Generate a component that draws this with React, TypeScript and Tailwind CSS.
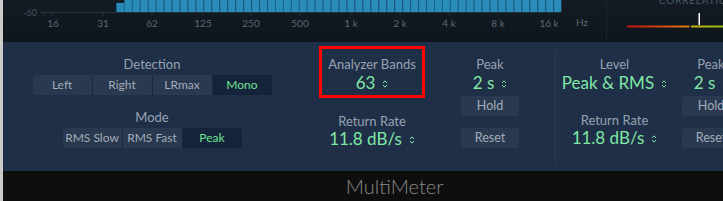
import type { ReactNode } from "react";

const font = { fontFamily: "Lato, 'Open Sans', sans-serif" };

const freqLabels: [string, number][] = [
  ["16", 53],
  ["31", 103],
  ["62", 152],
  ["125", 203],
  ["250", 251],
  ["500", 300],
  ["1 k", 351],
  ["2 k", 400],
  ["4 k", 449],
  ["8 k", 498],
  ["16 k", 549],
];

const Stepper = () => (
  <svg width="6" height="10" viewBox="0 0 6 10" className="ml-[7px] mt-[2px]">
    <path d="M1 4 L3 1.8 L5 4 M1 6 L3 8.2 L5 6" fill="none" stroke="#7fe6a4" strokeWidth="1" />
  </svg>
);

const Label = ({ children }: { children: ReactNode }) => (
  <div className="text-[13px] leading-[13px] text-[#97a2b2] whitespace-nowrap">{children}</div>
);

const Value = ({ children }: { children: ReactNode }) => (
  <div className="flex items-center text-[17px] leading-[18px] text-[#7fe6a4] whitespace-nowrap">
    {children}
    <Stepper />
  </div>
);

const Segmented = ({ items, active }: { items: string[]; active: string }) => (
  <div className="flex h-[20px] rounded-[3px] overflow-hidden bg-[#1a283c] gap-px">
    {items.map((item) => (
      <div
        key={item}
        className={`w-[59px] flex items-center justify-center text-[12px] ${
          item === active ? "bg-[#15233a] text-[#6ee391]" : "bg-[#293950] text-[#a3acb9]"
        }`}
      >
        {item}
      </div>
    ))}
  </div>
);

const Button = ({ children }: { children: ReactNode }) => (
  <div className="w-[58px] h-[20px] rounded-[3px] bg-[#293950] flex items-center justify-center text-[12.5px] text-[#a3acb9]">
    {children}
  </div>
);

const Spectrum = () => {
  const bars = Array.from({ length: 56 }, (_, i) => 116 + i * 7.95);
  return (
    <svg width="603" height="42" viewBox="3 0 603 42" className="block" style={font}>
      {bars.map((x, i) => (
        <g key={i}>
          <rect x={x} y={i === 0 ? 3 : 0} width={7.95} height={i === 0 ? 9 : 12} fill="#1c6286" />
          <rect x={x + 1} y={i === 0 ? 3 : 0} width={6.95} height={i === 0 ? 9 : 12} fill="#2a8cb9" />
        </g>
      ))}
      <line x1="40" y1="12.5" x2="560" y2="12.5" stroke="#26313d" strokeWidth="1" />
      {[43, ...freqLabels.map((f) => f[1])].map((x) => (
        <line key={x} x1={x} y1="12" x2={x} y2="16" stroke="#26313d" strokeWidth="1" />
      ))}
      <text x="30" y="16" textAnchor="middle" fontSize="9" fill="#4b5664">
        -60
      </text>
      {freqLabels.map(([t, x]) => (
        <text key={t} x={x} y="27" textAnchor="middle" fontSize="10" fill="#5c6876">
          {t}
        </text>
      ))}
      <text x="582" y="26" textAnchor="middle" fontSize="10" fill="#5c6876">
        Hz
      </text>
    </svg>
  );
};

const Correlation = () => (
  <svg width="116" height="42" viewBox="607 0 116 42" className="block" style={font}>
    <defs>
      <linearGradient id="corrRed" x1="0" x2="1" y1="0" y2="0">
        <stop offset="0" stopColor="#c41111" />
        <stop offset="1" stopColor="#e07d10" />
      </linearGradient>
      <linearGradient id="corrGreen" x1="0" x2="1" y1="0" y2="0">
        <stop offset="0" stopColor="#c9b012" />
        <stop offset="1" stopColor="#8fbd13" />
      </linearGradient>
    </defs>
    <text x="659" y="4" fontSize="10" fill="#4d5b6a" letterSpacing="0.8">
      CORRELATION
    </text>
    <rect x="627" y="25.5" width="62.5" height="2" fill="url(#corrRed)" />
    <rect x="691" y="25.5" width="32" height="2" fill="url(#corrGreen)" />
    <rect x="698.5" y="13" width="1.5" height="12" fill="#ffffff" />
  </svg>
);

export default function App() {
  return (
    <div className="w-[723px] h-[201px] flex overflow-hidden bg-[#0e0e0e]" style={font}>
      <div className="w-[3px] bg-[#cbcbcb] shrink-0" />
      <div className="flex-1 flex flex-col">
        <div className="h-[42px] flex bg-gradient-to-b from-[#141b24] to-[#0f151c]">
          <Spectrum />
          <div className="w-px bg-[#1c242e]" />
          <Correlation />
        </div>

        <div className="h-[130px] flex bg-[#1f2f48]">
          <div className="w-[298px] flex flex-col items-center pt-[16px]">
            <Label>Detection</Label>
            <div className="mt-[4px]">
              <Segmented items={["Left", "Right", "LRmax", "Mono"]} active="Mono" />
            </div>
            <div className="mt-[16px]">
              <Label>Mode</Label>
            </div>
            <div className="mt-[4px]">
              <Segmented items={["RMS Slow", "RMS Fast", "Peak"]} active="Peak" />
            </div>
          </div>

          <div className="w-[142px] flex flex-col items-center pt-[4px]">
            <div className="w-[106px] h-[52px] border-[3px] border-[#ff0000] flex flex-col items-center pt-[9px]">
              <Label>Analyzer Bands</Label>
              <div className="mt-[3px]">
                <Value>63</Value>
              </div>
            </div>
            <div className="mt-[17px]">
              <Label>Return Rate</Label>
            </div>
            <div className="mt-[2px]">
              <Value>11.8 dB/s</Value>
            </div>
          </div>

          <div className="w-[94px] flex flex-col items-center pt-[16px]">
            <Label>Peak</Label>
            <div className="mt-[3px]">
              <Value>2 s</Value>
            </div>
            <div className="mt-[4px]">
              <Button>Hold</Button>
            </div>
            <div className="mt-[12px]">
              <Button>Reset</Button>
            </div>
          </div>

          <div className="w-[18px]" />
          <div className="w-px my-[8px] bg-[#2a3b54]" />

          <div className="w-[117px] flex flex-col items-center pt-[16px]">
            <Label>Level</Label>
            <div className="mt-[3px]">
              <Value>Peak &amp; RMS</Value>
            </div>
            <div className="mt-[22px]">
              <Label>Return Rate</Label>
            </div>
            <div className="mt-[2px]">
              <Value>11.8 dB/s</Value>
            </div>
          </div>

          <div className="w-[9px]" />
          <div className="w-[58px] shrink-0 flex flex-col items-center pt-[16px]">
            <Label>Peak</Label>
            <div className="mt-[3px]">
              <Value>2 s</Value>
            </div>
            <div className="mt-[4px]">
              <Button>Hold</Button>
            </div>
            <div className="mt-[12px]">
              <Button>Reset</Button>
            </div>
          </div>
        </div>

        <div className="flex-1 flex items-center justify-center pl-[46px] text-[20px] font-light text-[#8a8a8a]">
          MultiMeter
        </div>
      </div>
    </div>
  );
}
